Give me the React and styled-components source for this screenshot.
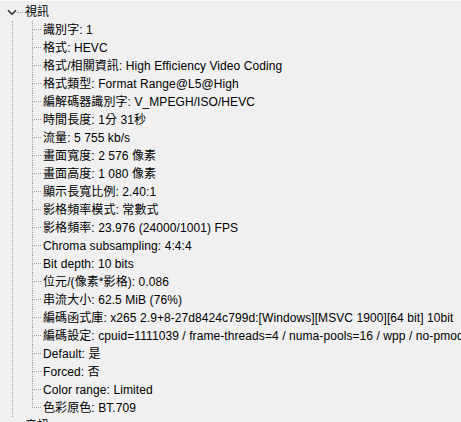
import React from "react"
import styled, {createGlobalStyle} from "styled-components"

const rows = [
	"識別字: 1",
	"格式: HEVC",
	"格式/相關資訊: High Efficiency Video Coding",
	"格式類型: Format Range@L5@High",
	"編解碼器識別字: V_MPEGH/ISO/HEVC",
	"時間長度: 1分 31秒",
	"流量: 5 755 kb/s",
	"畫面寬度: 2 576 像素",
	"畫面高度: 1 080 像素",
	"顯示長寬比例: 2.40:1",
	"影格頻率模式: 常數式",
	"影格頻率: 23.976 (24000/1001) FPS",
	"Chroma subsampling: 4:4:4",
	"Bit depth: 10 bits",
	"位元/(像素*影格): 0.086",
	"串流大小: 62.5 MiB (76%)",
	"編碼函式庫: x265 2.9+8-27d8424c799d:[Windows][MSVC 1900][64 bit] 10bit",
	"編碼設定: cpuid=1111039 / frame-threads=4 / numa-pools=16 / wpp / no-pmode / no-pme / no-psnr / no-ssim",
	"Default: 是",
	"Forced: 否",
	"Color range: Limited",
	"色彩原色: BT.709",
]

const Chevron = () => (
	<ToggleBox>
		<svg width="10" height="7" viewBox="0 0 10 7">
			<path d="M1 1.2 L5 5.2 L9 1.2" fill="none" stroke="#333" strokeWidth="1.6"/>
		</svg>
	</ToggleBox>
)

const App = () => {
	return (
		<>
			<Global/>
			<Tree>
				<TopRow>
					<Chevron/>
					<TopDash/>
					<Label>視訊</Label>
				</TopRow>
				<Children>
					{rows.map((txt, i) => (
						<ChildRow key={i}>
							<Elbow>
								<ElbowTop/>
								<ElbowBottom $last={i === rows.length - 1}/>
							</Elbow>
							<Label>{txt}</Label>
						</ChildRow>
					))}
				</Children>
				<TopRow>
					<Chevron/>
					<TopDash/>
					<Label>音訊</Label>
				</TopRow>
			</Tree>
		</>
	)
}

export default App

const Global = createGlobalStyle`
	html, body {
		margin: 0;
		padding: 0;
		background: #f0f0f0;
		overflow: hidden;
	}
`

const Tree = styled.div`
	width: 461px;
	height: 422px;
	overflow: hidden;
	box-sizing: border-box;
	border-top: 1px solid #fafafa;
	padding-top: 2px;
	font-family: "Liberation Sans", "Noto Sans CJK TC", sans-serif;
	font-size: 12px;
	letter-spacing: 0.08px;
	color: #000;
`

const TopRow = styled.div`
	display: flex;
	align-items: center;
	height: 18px;
	padding-left: 7px;
`

const ToggleBox = styled.span`
	display: flex;
	align-items: center;
	justify-content: center;
	width: 10px;
	height: 18px;
`

const TopDash = styled.span`
	width: 6px;
	border-top: 1px dotted #a0a0a0;
`

const Label = styled.span`
	padding-left: 2px;
	white-space: nowrap;
	line-height: 18px;
`

const Children = styled.div`
	margin-left: 12px;
	border-left: 1px dotted #a0a0a0;
	padding-left: 19px;
`

const ChildRow = styled.div`
	display: flex;
	align-items: stretch;
	height: 18px;
`

const Elbow = styled.span`
	display: flex;
	flex-direction: column;
	width: 9px;
	flex: 0 0 9px;
`

const ElbowTop = styled.span`
	height: 9px;
	border-left: 1px dotted #a0a0a0;
	border-bottom: 1px dotted #a0a0a0;
	box-sizing: border-box;
`

const ElbowBottom = styled.span`
	height: 9px;
	border-left: ${p => p.$last ? "none" : "1px dotted #a0a0a0"};
	box-sizing: border-box;
`
